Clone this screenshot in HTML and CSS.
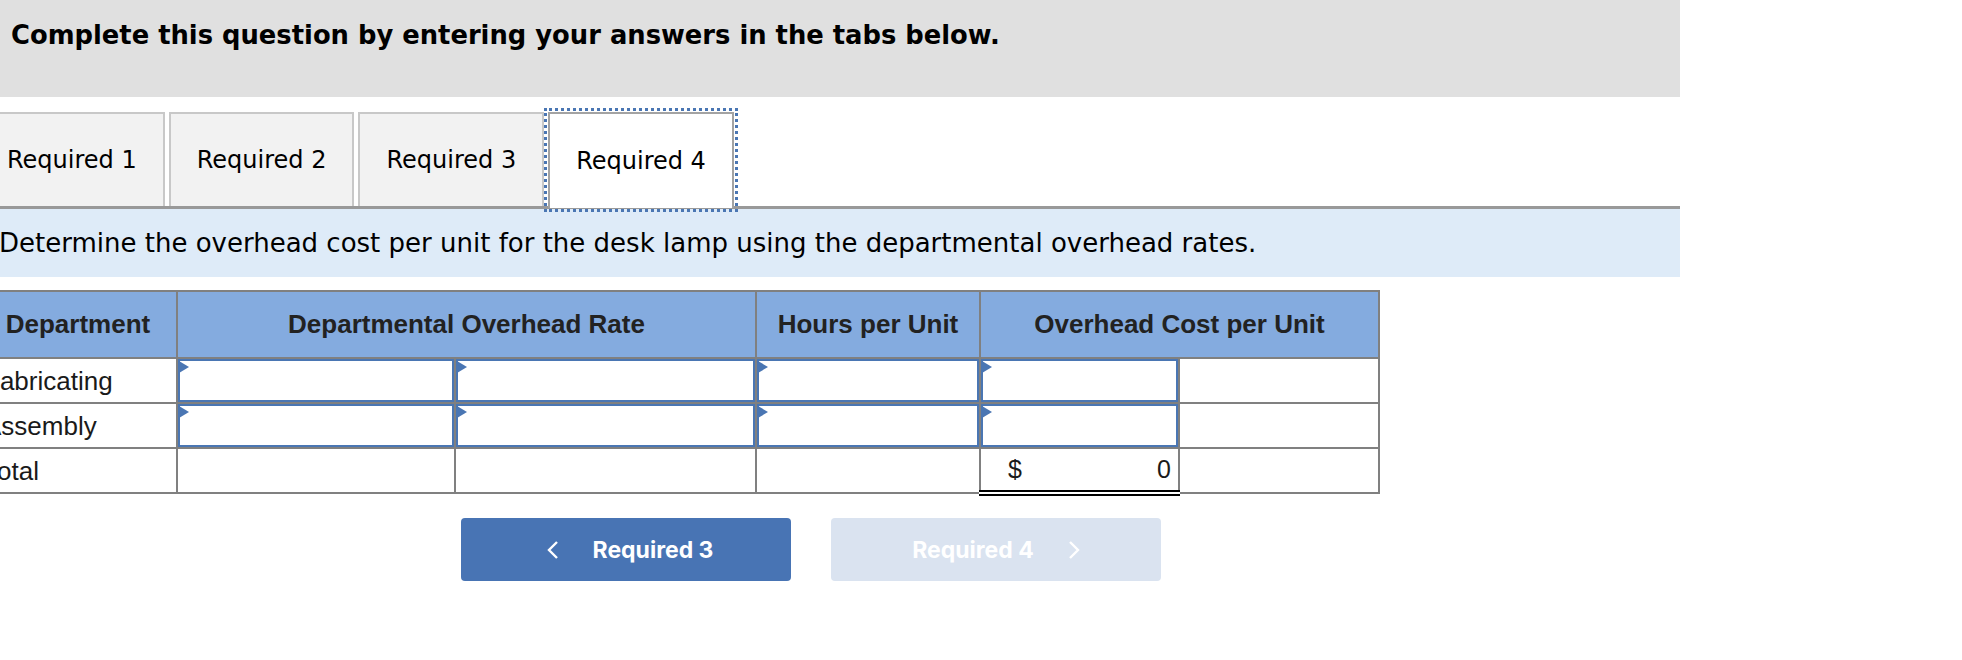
FILE: index.html
```html
<!DOCTYPE html>
<html lang="en">
<head>
<meta charset="utf-8">
<title>Required 4</title>
<link rel="stylesheet" href="styles.css">
</head>
<body>
<div class="page">
  <div class="banner">
    <h1 class="banner-title">Complete this question by entering your answers in the tabs below.</h1>
  </div>

  <div class="tabs">
    <div class="tab">Required 1</div>
    <div class="tab">Required 2</div>
    <div class="tab">Required 3</div>
    <div class="tab active">Required 4</div>
  </div>

  <div class="prompt">Determine the overhead cost per unit for the desk lamp using the departmental overhead rates.</div>

  <table class="grid">
    <colgroup>
      <col class="c-dept">
      <col class="c-rate-a">
      <col class="c-rate-b">
      <col class="c-hours">
      <col class="c-cost-a">
      <col class="c-cost-b">
    </colgroup>
    <thead>
      <tr class="head-row">
        <th>Department</th>
        <th colspan="2">Departmental Overhead Rate</th>
        <th>Hours per Unit</th>
        <th colspan="2">Overhead Cost per Unit</th>
      </tr>
    </thead>
    <tbody>
      <tr class="body-row">
        <td class="label">Fabricating</td>
        <td class="in"><span class="mark"></span><input class="field" type="text"></td>
        <td class="in"><span class="mark"></span><input class="field" type="text"></td>
        <td class="in"><span class="mark"></span><input class="field" type="text"></td>
        <td class="in"><span class="mark"></span><input class="field" type="text"></td>
        <td></td>
      </tr>
      <tr class="body-row">
        <td class="label">Assembly</td>
        <td class="in"><span class="mark"></span><input class="field" type="text"></td>
        <td class="in"><span class="mark"></span><input class="field" type="text"></td>
        <td class="in"><span class="mark"></span><input class="field" type="text"></td>
        <td class="in"><span class="mark"></span><input class="field" type="text"></td>
        <td></td>
      </tr>
      <tr class="body-row">
        <td class="label">Total</td>
        <td></td>
        <td></td>
        <td></td>
        <td class="total"><div class="money"><span>$</span><span>0</span></div></td>
        <td></td>
      </tr>
    </tbody>
  </table>

  <div class="nav">
    <button class="btn prev" type="button">
      <svg class="chev" viewBox="0 0 11 18" width="11" height="18"><path d="M10 1 L2 9 L10 17" fill="none" stroke="#ffffff" stroke-width="2.4" stroke-linejoin="miter"/></svg>
      <span>Required 3</span>
    </button>
    <button class="btn next" type="button">
      <span>Required 4</span>
      <svg class="chev" viewBox="0 0 11 18" width="11" height="18"><path d="M1 1 L9 9 L1 17" fill="none" stroke="#ffffff" stroke-width="2.4" stroke-linejoin="miter"/></svg>
    </button>
  </div>
</div>
</body>
</html>
```

FILE: styles.css
```css
html, body {
  margin: 0;
  padding: 0;
  background: #ffffff;
  overflow: hidden;
}

body {
  width: 1962px;
  height: 660px;
}

.page {
  margin-left: -22px;
  width: 1702px;
}

.banner {
  height: 97px;
  background: #e0e0e0;
  box-sizing: border-box;
  padding: 19px 0 0 33px;
}

.banner-title {
  margin: 0;
  font-family: "DejaVu Sans", Verdana, sans-serif;
  font-weight: bold;
  font-size: 25.8px;
  line-height: 32px;
  color: #000000;
}

.tabs {
  display: flex;
  gap: 4px;
  margin-top: 15px;
  padding-left: 1px;
}

.tab {
  height: 94px;
  box-sizing: border-box;
  padding: 0 26px;
  display: flex;
  align-items: center;
  background: #f2f2f2;
  border: 2px solid #c8c8c8;
  border-bottom: none;
  font-family: "DejaVu Sans", Verdana, sans-serif;
  font-size: 24px;
  color: #000000;
}

.tab.active {
  background: #ffffff;
  border-color: #a3a3a3;
  outline: 3px dotted #4a76b3;
  outline-offset: 1px;
  height: 96px;
  margin-bottom: -2px;
  position: relative;
  z-index: 1;
}

.prompt {
  border-top: 3px solid #999999;
  background: #deebf8;
  height: 71px;
  box-sizing: border-box;
  display: flex;
  align-items: center;
  padding-left: 21px;
  font-family: "DejaVu Sans", Verdana, sans-serif;
  font-size: 26px;
  color: #000000;
}

.grid {
  margin-top: 13px;
  border-collapse: collapse;
  table-layout: fixed;
  width: 1400px;
  font-family: "Liberation Sans", Arial, sans-serif;
  font-size: 26px;
  color: #1a1a1a;
}

.c-dept { width: 198px; }
.c-rate-a { width: 278px; }
.c-rate-b { width: 301px; }
.c-hours { width: 224px; }
.c-cost-a { width: 199px; }
.c-cost-b { width: 200px; }

.grid th,
.grid td {
  border: 2px solid #808080;
  padding: 0;
}

.head-row {
  height: 67px;
}

.grid th {
  background: #84abdf;
  font-weight: bold;
  font-size: 26px;
  text-align: center;
  color: #222222;
}

.body-row {
  height: 45px;
}

.grid td.label {
  padding-left: 4px;
  padding-top: 2px;
  text-align: left;
}

.grid td.in {
  position: relative;
  padding: 0;
}

.field {
  display: block;
  width: 100%;
  height: 43px;
  box-sizing: border-box;
  margin: 0;
  border: 2px solid #4a76b3;
  background: #ffffff;
  outline: none;
}

.mark {
  position: absolute;
  top: 2px;
  left: 1px;
  width: 0;
  height: 0;
  border-top: 6px solid transparent;
  border-bottom: 6px solid transparent;
  border-left: 10px solid #4a76b3;
}

.grid td.total {
  border-top: 2px solid #000000;
  border-bottom: 6px double #000000;
  font-size: 25px;
}

.money {
  display: flex;
  justify-content: space-between;
  padding: 0 7px 0 27px;
}

.nav {
  display: flex;
  gap: 40px;
  margin-top: 22px;
  padding-left: 483px;
}

.btn {
  width: 330px;
  height: 63px;
  border: none;
  border-radius: 4px;
  display: flex;
  align-items: center;
  justify-content: center;
  gap: 35px;
  font-family: Inter, Roboto, "Liberation Sans", sans-serif;
  font-weight: bold;
  font-size: 23px;
  color: #ffffff;
  padding: 0;
}

.btn.prev {
  background: #4874b4;
  padding-left: 8px;
}

.btn.next {
  background: #dae3f0;
}

.chev {
  display: block;
}
```
